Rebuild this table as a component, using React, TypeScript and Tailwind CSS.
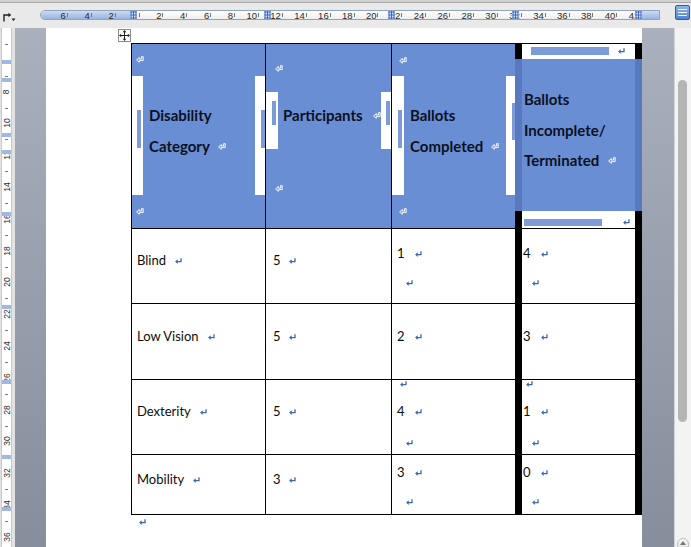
import React from "react";

function Ret({ className = "" }: { className?: string }) {
  return (
    <svg width="7" height="6" viewBox="0 0 7 6" className={"block shrink-0 " + className}>
      <path d="M6 0.2 V3.6 H2" stroke="#3d67b3" strokeWidth="1.3" fill="none" />
      <path d="M0.1 3.6 L2.7 1.3 L2.7 5.9 Z" fill="#3d67b3" />
    </svg>
  );
}

function CellMark({ className = "" }: { className?: string }) {
  return (
    <svg width="8" height="7" viewBox="0 0 8 7" className={"block shrink-0 " + className}>
      <path
        d="M7.2 0.6 V4.6 H3.3 V6.3 L0.6 3.9 L3.3 1.5 V3 H5.6 V0.6 Z"
        fill="#7d9bd9"
        stroke="#ffffff"
        strokeWidth="0.9"
        strokeLinejoin="round"
      />
    </svg>
  );
}

function GridMark() {
  return (
    <svg width="7" height="10" viewBox="0 0 7 10" className="block">
      <rect width="7" height="10" fill="#d9e4f4" />
      <g stroke="#2d5fbf" strokeWidth="0.9">
        <line x1="1" y1="1" x2="1" y2="9" />
        <line x1="3.5" y1="1" x2="3.5" y2="9" />
        <line x1="6" y1="1" x2="6" y2="9" />
        <line x1="0.5" y1="2" x2="6.5" y2="2" />
        <line x1="0.5" y1="5" x2="6.5" y2="5" />
        <line x1="0.5" y1="8" x2="6.5" y2="8" />
      </g>
    </svg>
  );
}

const topLabels = ["6", "4", "2", "", "2", "4", "6", "8", "10", "12", "14", "16", "18", "20", "22", "24", "26", "28", "30", "32", "34", "36", "38", "40", "42"];
const sideLabels = ["", "8", "10", "12", "14", "16", "18", "20", "22", "24", "26", "28", "30", "32", "34", "36"];
const sideMarks = [32, 50, 105, 122, 184, 277, 352, 427, 479];

function TopRuler() {
  return (
    <div className="relative ml-[40px] mt-[7px] h-[10px] w-[620px] overflow-hidden rounded-l-full border border-[#8ea2c2] font-['Liberation_Sans',sans-serif]">
      <div className="flex h-full">
        <div className="h-full w-[90px] bg-linear-to-b from-[#cddbf0] to-[#98b4de]" />
        <div className="h-full w-[505px] bg-linear-to-b from-[#ffffff] to-[#eeeeee]" />
        <div className="h-full flex-1 bg-linear-to-b from-[#cddbf0] to-[#98b4de]" />
      </div>
      <div className="absolute inset-0 flex pl-[3px]">
        {topLabels.map((l, i) => (
          <div key={i} className="flex h-full w-[23.9px] shrink-0 items-center justify-end">
            <span className="text-[9.5px] leading-[9px] text-[#2b2b2b]">{l}</span>
            <span className="ml-[1px] h-[4px] w-[1px] bg-[#777]" />
          </div>
        ))}
      </div>
      <div className="absolute left-[89px] top-[-1px]"><GridMark /></div>
      <div className="absolute left-[223px] top-[-1px]"><GridMark /></div>
      <div className="absolute left-[347px] top-[-1px]"><GridMark /></div>
      <div className="absolute left-[471px] top-[-1px]"><GridMark /></div>
      <div className="absolute left-[594px] top-[-1px]"><GridMark /></div>
    </div>
  );
}

function SideRuler() {
  return (
    <div className="relative h-full w-[15px] shrink-0 bg-[#e2e2e2] font-['Liberation_Sans',sans-serif]">
      <div className="relative ml-[1px] h-full w-[11px] overflow-hidden border-x border-[#c9c9c9] bg-white">
        <div className="flex flex-col pt-[16px]">
          {sideLabels.map((l, i) => (
            <div key={i} className="flex h-[31.8px] shrink-0 flex-col items-center justify-between">
              <span className="h-[1px] w-[3px] bg-[#777]" />
              <span className="-rotate-90 text-[8.5px] leading-[8px] text-[#2b2b2b]">{l}</span>
              <span className="h-[1px] w-[3px]" />
            </div>
          ))}
        </div>
        {sideMarks.map((y, i) => (
          <div key={i} className="absolute left-0 h-[4px] w-full bg-[#9fb9df]" style={{ top: y }} />
        ))}
      </div>
    </div>
  );
}

function Line({ children, gap = 8 }: { children: React.ReactNode; gap?: number }) {
  return (
    <div className="flex h-[16px] items-center leading-[16px]">
      <span>{children}</span>
      <span style={{ width: gap }} className="shrink-0" />
      <Ret className="mt-[1px]" />
    </div>
  );
}

function MarkLine({ indent = 0, className = "" }: { indent?: number; className?: string }) {
  return (
    <div className={"flex h-[6px] items-center " + className} style={{ paddingLeft: indent }}>
      <Ret />
    </div>
  );
}

const cell = "shrink-0 border-l border-black";
const c4 = "w-[127px] shrink-0 border-x-[7px] border-black";

function Table() {
  return (
    <div className="flex w-[511px] flex-col text-[13px] text-[#0c0c0c]">
      {/* header */}
      <div className="flex h-[185px] text-[15px] font-bold text-[#0b1122]">
        {/* col1 */}
        <div className={"relative w-[134px] border-t bg-[#6a8ed3] " + cell}>
          <div className="absolute left-0 top-[32px] h-[119px] w-[11px] bg-white">
            <div className="ml-[5px] mt-[34px] h-[38px] w-[4px] bg-[#7d9bd6]" />
          </div>
          <div className="absolute right-0 top-[32px] h-[119px] w-[10px] bg-white">
            <div className="ml-[6px] mt-[34px] h-[38px] w-[4px] bg-[#7d9bd6]" />
          </div>
          <div className="flex flex-col pl-[4px] pt-[12px]">
            <CellMark />
            <div className="relative mt-[37px] pl-[13px] leading-[31px]">
              <div>Disability</div>
              <div className="flex items-center">
                Category
                <CellMark className="ml-[8px]" />
              </div>
            </div>
            <CellMark className="mt-[46px]" />
          </div>
        </div>
        {/* col2 */}
        <div className={"relative w-[126px] border-t bg-[#6a8ed3] " + cell}>
          <div className="absolute left-0 top-[48px] h-[57px] w-[12px] bg-white">
            <div className="ml-[6px] mt-[9px] h-[24px] w-[4px] bg-[#7d9bd6]" />
          </div>
          <div className="absolute right-0 top-[48px] h-[57px] w-[10px] bg-white">
            <div className="ml-[5px] mt-[9px] h-[24px] w-[4px] bg-[#7d9bd6]" />
          </div>
          <div className="flex flex-col pl-[9px] pt-[21px]">
            <CellMark />
            <div className="relative mt-[28px] flex items-center pl-[8px] leading-[31px]">
              Participants
              <CellMark className="ml-[10px]" />
            </div>
            <CellMark className="mt-[54px]" />
          </div>
        </div>
        {/* col3 */}
        <div className={"relative w-[124px] border-t bg-[#6a8ed3] " + cell}>
          <div className="absolute left-0 top-[32px] h-[119px] w-[12px] bg-white">
            <div className="ml-[6px] mt-[34px] h-[38px] w-[4px] bg-[#7d9bd6]" />
          </div>
          <div className="absolute right-0 top-[32px] h-[119px] w-[9px] bg-white">
            <div className="ml-[6px] mt-[27px] h-[37px] w-[3px] bg-[#7d9bd6]" />
          </div>
          <div className="flex flex-col pl-[7px] pt-[13px]">
            <CellMark />
            <div className="relative mt-[36px] pl-[11px] leading-[31px]">
              <div>Ballots</div>
              <div className="flex items-center">
                Completed
                <CellMark className="ml-[8px]" />
              </div>
            </div>
            <CellMark className="mt-[46px]" />
          </div>
        </div>
        {/* col4 */}
        <div className="flex w-[127px] shrink-0 flex-col">
          <div className="flex h-[16px]">
            <div className="w-[7px] bg-black" />
            <div className="flex flex-1 items-start border-t border-black bg-white pl-[9px] pt-[3px]">
              <div className="h-[8px] w-[78px] bg-[#7d9bd8]" />
              <Ret className="ml-[9px] mt-[1px]" />
            </div>
            <div className="w-[7px] bg-black" />
          </div>
          <div className="flex h-[152px]">
            <div className="w-[7px] bg-[#5878bf]" />
            <div className="flex-1 bg-[#6a8ed3] pl-[2px] pt-[25px] leading-[30.5px]">
              <div>Ballots</div>
              <div>Incomplete/</div>
              <div className="flex items-center">
                Terminated
                <CellMark className="ml-[9px]" />
              </div>
            </div>
            <div className="w-[7px] bg-[#5878bf]" />
          </div>
          <div className="flex h-[17px]">
            <div className="w-[7px] bg-black" />
            <div className="flex flex-1 items-start bg-white pl-[2px] pt-[8px]">
              <div className="h-[7px] w-[78px] bg-[#7d9bd8]" />
              <Ret className="ml-[21px]" />
            </div>
            <div className="w-[7px] bg-black" />
          </div>
        </div>
      </div>

      {/* row 1 */}
      <div className="flex h-[75px] border-t border-black">
        <div className={"w-[134px] pl-[5px] pt-[23px] " + cell}>
          <Line gap={9}>Blind</Line>
        </div>
        <div className={"w-[126px] pl-[7px] pt-[23px] " + cell}>
          <Line>5</Line>
        </div>
        <div className={"flex w-[124px] flex-col pl-[5px] pt-[16px] " + cell}>
          <Line gap={10}>1</Line>
          <MarkLine indent={9} className="mt-[19px]" />
        </div>
        <div className={"flex flex-col pl-[1px] pt-[16px] " + c4}>
          <Line gap={10}>4</Line>
          <MarkLine indent={9} className="mt-[19px]" />
        </div>
      </div>

      {/* row 2 */}
      <div className="flex h-[76px] border-t border-black">
        <div className={"w-[134px] pl-[5px] pt-[24px] " + cell}>
          <Line gap={9}>Low Vision</Line>
        </div>
        <div className={"w-[126px] pl-[7px] pt-[24px] " + cell}>
          <Line>5</Line>
        </div>
        <div className={"w-[124px] pl-[5px] pt-[24px] " + cell}>
          <Line gap={10}>2</Line>
        </div>
        <div className={"pl-[1px] pt-[24px] " + c4}>
          <Line gap={10}>3</Line>
        </div>
      </div>

      {/* row 3 */}
      <div className="flex h-[75px] border-t border-black">
        <div className={"w-[134px] pl-[5px] pt-[23px] " + cell}>
          <Line gap={9}>Dexterity</Line>
        </div>
        <div className={"w-[126px] pl-[7px] pt-[23px] " + cell}>
          <Line>5</Line>
        </div>
        <div className={"flex w-[124px] flex-col pl-[5px] pt-[1px] " + cell}>
          <MarkLine indent={3} />
          <div className="mt-[16px]">
            <Line gap={10}>4</Line>
          </div>
          <MarkLine indent={9} className="mt-[21px]" />
        </div>
        <div className={"flex flex-col pl-[1px] pt-[1px] " + c4}>
          <MarkLine indent={3} />
          <div className="mt-[16px]">
            <Line gap={10}>1</Line>
          </div>
          <MarkLine indent={9} className="mt-[21px]" />
        </div>
      </div>

      {/* row 4 */}
      <div className="flex h-[61px] border-y border-black">
        <div className={"w-[134px] pl-[5px] pt-[16px] " + cell}>
          <Line gap={9}>Mobility</Line>
        </div>
        <div className={"w-[126px] pl-[7px] pt-[16px] " + cell}>
          <Line>3</Line>
        </div>
        <div className={"flex w-[124px] flex-col pl-[5px] pt-[9px] " + cell}>
          <Line gap={10}>3</Line>
          <MarkLine indent={9} className="mt-[19px]" />
        </div>
        <div className={"flex flex-col pl-[1px] pt-[9px] " + c4}>
          <Line gap={10}>0</Line>
          <MarkLine indent={9} className="mt-[19px]" />
        </div>
      </div>
    </div>
  );
}

export default function App() {
  return (
    <div className="flex h-[547px] w-[691px] flex-col overflow-hidden bg-[#e9e9e9] font-['Lato',sans-serif]">
      {/* top toolbar with ruler */}
      <div className="flex h-[28px] shrink-0 flex-col">
        <div className="h-[3px] border-b border-[#a8a8a8] bg-[#d0d0d0]" />
        <div className="flex h-[25px] items-start">
          <svg width="14" height="10" viewBox="0 0 14 10" className="ml-[2px] mt-[9px] block shrink-0">
            <path d="M2 9.5 V3 H7" stroke="#222" strokeWidth="1.4" fill="none" />
            <path d="M6.5 0.8 L9.2 3 L6.5 5.2 Z" fill="#222" />
            <path d="M9.5 6.5 H13.5 L11.5 9 Z" fill="#222" />
          </svg>
          <div className="ml-[-16px]">
            <TopRuler />
          </div>
          <div className="ml-[15px] mt-[2px] flex h-[15px] w-[15px] shrink-0 flex-col justify-center gap-[2px] rounded-[2px] border border-[#2c5ea9] bg-linear-to-b from-[#8fb5ea] to-[#4f85d0] px-[2px]">
            <div className="h-[1px] bg-[#f2f6fc]" />
            <div className="h-[1px] bg-[#f2f6fc]" />
            <div className="h-[1px] bg-[#f2f6fc]" />
          </div>
        </div>
      </div>

      {/* workspace */}
      <div className="flex min-h-0 flex-1">
        <SideRuler />
        <div className="h-full w-[31px] shrink-0 bg-linear-to-b from-[#aab1bd] to-[#868e9c]" />
        <div className="relative h-full w-[596px] shrink-0 bg-white">
          <div className="absolute left-[72px] top-[1px] flex h-[13px] w-[13px] items-center justify-center border border-[#8a8a8a] bg-white">
            <svg width="11" height="11" viewBox="0 0 11 11" className="block">
              <g stroke="#222" strokeWidth="1" fill="none">
                <line x1="5.5" y1="1.5" x2="5.5" y2="9.5" />
                <line x1="1.5" y1="5.5" x2="9.5" y2="5.5" />
              </g>
              <g fill="#222">
                <path d="M5.5 0 L7.3 2.2 L3.7 2.2 Z" />
                <path d="M5.5 11 L7.3 8.8 L3.7 8.8 Z" />
                <path d="M0 5.5 L2.2 3.7 L2.2 7.3 Z" />
                <path d="M11 5.5 L8.8 3.7 L8.8 7.3 Z" />
              </g>
            </svg>
          </div>
          <div className="flex flex-col pl-[85px] pt-[15px]">
            <Table />
            <MarkLine indent={8} className="mt-[4px]" />
          </div>
        </div>
        <div className="h-full w-[32px] shrink-0 bg-linear-to-b from-[#aab1bd] to-[#868e9c]" />
        <div className="relative h-full w-[17px] shrink-0 border-l border-[#d4d4d4] bg-[#f3f3f3]">
          <div className="ml-[3px] mt-[52px] h-[342px] w-[9px] rounded-full bg-[#b5b5b5]" />
          <div className="absolute bottom-[-4px] left-[2px] flex h-[13px] w-[12px] items-start justify-center rounded-full border border-[#bdbdbd] bg-linear-to-b from-[#fafafa] to-[#dcdcdc] pt-[2px]">
            <svg width="6" height="4" viewBox="0 0 6 4" className="block">
              <path d="M3 0 L6 4 H0 Z" fill="#777" />
            </svg>
          </div>
        </div>
      </div>
    </div>
  );
}
